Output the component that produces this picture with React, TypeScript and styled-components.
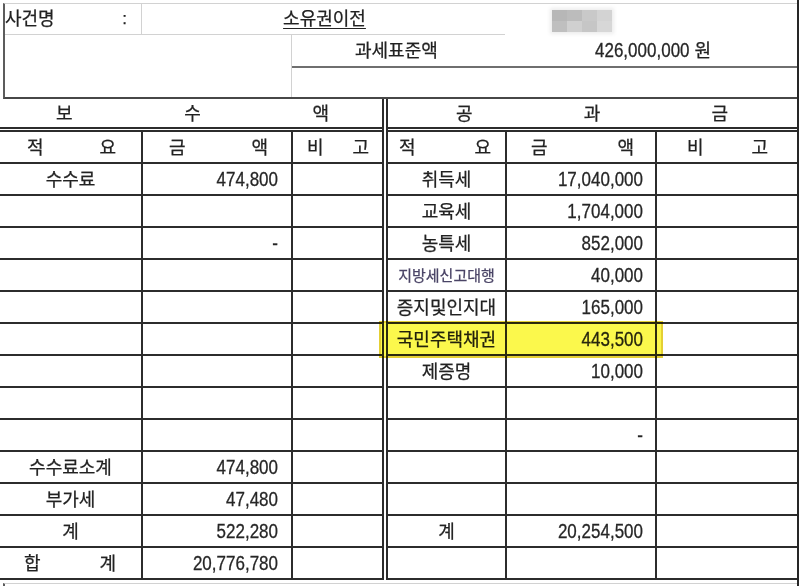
import React from "react";
import styled, { createGlobalStyle } from "styled-components";

const LINE = "#2c2c2c";
const LIGHT = "#d2d2d2";

const GlobalStyle = createGlobalStyle`
  html, body { margin: 0; padding: 0; background: #ffffff; }
  body {
    font-family: "Liberation Sans", "Noto Sans CJK KR", sans-serif;
    color: #222222;
    -webkit-text-stroke: 0.25px currentColor;
  }
`;

const Page = styled.div`
  position: relative;
  box-sizing: border-box;
  width: 799px;
  height: 586px;
  padding-top: 3px;
  border-right: 2px solid #262626;
  overflow: hidden;
  background: #fff;
`;

/* ---------- top information box ---------- */
const InfoBox = styled.div`
  box-sizing: border-box;
  height: 96px;
  margin-left: 3px;
  border-top: 1px solid ${LIGHT};
  border-left: 2px solid #5c5c5c;
  border-bottom: 2px solid #474747;
  display: flex;
  flex-direction: column;
`;

const InfoTop = styled.div`
  display: grid;
  grid-template-columns: 137px 363px 1fr;
  height: 31px;
`;

const InfoCell = styled.div<{ $divider?: boolean; $underline?: boolean }>`
  box-sizing: border-box;
  display: flex;
  align-items: center;
  border-bottom: ${(p) => (p.$underline ? `1px solid ${LIGHT}` : "none")};
  border-right: ${(p) => (p.$divider ? `1px solid ${LIGHT}` : "none")};
  font-size: 18px;
  line-height: 1;
`;

const CaseLabel = styled(InfoCell)`
  justify-content: space-between;
  padding: 0 14px 1px 0;
`;

const Colon = styled.span`
  font-size: 17px;
`;

const CaseValue = styled(InfoCell)`
  justify-content: center;
  padding-left: 2px;
`;

const Underlined = styled.span`
  text-decoration: underline;
  text-underline-offset: 3px;
  text-decoration-thickness: 1px;
`;

const BlurCell = styled(InfoCell)`
  align-items: flex-start;
  padding: 6px 0 0 47px;
`;

const Mosaic = styled.div`
  width: 60px;
  height: 22px;
  background:
    linear-gradient(to right, #b7b7b7 0 25%, #bcbcbc 25% 50%, #c9c9c9 50% 75%, #d3d3d3 75% 100%) top / 100% 50% no-repeat,
    linear-gradient(to right, #bfbfbf 0 25%, #d0d0d0 25% 50%, #c6c6c6 50% 75%, #d7d7d7 75% 100%) bottom / 100% 50% no-repeat;
  box-shadow: 0 0 4px 2px #ececec;
`;

const InfoBottom = styled.div`
  flex: 1;
  display: grid;
  grid-template-columns: 287px 1fr;
`;

const BlankBlock = styled.div`
  border-right: 1px solid ${LIGHT};
`;

const TaxBlock = styled.div`
  display: flex;
  flex-direction: column;
`;

const TaxRow = styled.div`
  box-sizing: border-box;
  height: 33px;
  display: flex;
  align-items: center;
  padding-left: 63px;
  border-bottom: 2px solid #6f6f6f;
  font-size: 18px;
  line-height: 1;
`;

const TaxLabel = styled.span`
  width: 240px;
`;

const TaxAmount = styled.span`
  display: flex;
  align-items: center;
  gap: 5px;
`;

/* ---------- main ledger ---------- */
const Ledger = styled.div`
  display: flex;
`;

const Side = styled.div<{ $side: "left" | "right" }>`
  box-sizing: border-box;
  width: ${(p) => (p.$side === "left" ? 384 : 411)}px;
  ${(p) => (p.$side === "left" ? "border-right" : "border-left")}: 2px solid ${LINE};
  display: flex;
  flex-direction: column;
`;

const SideGap = styled.div`
  width: 2px;
`;

const GroupTitle = styled.div<{ $pl: number; $pr: number }>`
  box-sizing: border-box;
  height: 33px;
  border-bottom: 5px double ${LINE};
  display: flex;
  align-items: center;
  justify-content: space-between;
  padding: 1px ${(p) => p.$pr}px 0 ${(p) => p.$pl}px;
  font-size: 18px;
  line-height: 1;
`;

const Row = styled.div<{ $cols: string }>`
  display: grid;
  grid-template-columns: ${(p) => p.$cols};
  height: 32px;
`;

type Align = "center" | "right" | "spread";

const Cell = styled.div<{ $align: Align; $pl?: number; $pr?: number; $last?: boolean }>`
  box-sizing: border-box;
  border-bottom: 2px solid ${LINE};
  border-right: ${(p) => (p.$last ? "none" : `2px solid ${LINE}`)};
  display: flex;
  align-items: center;
  justify-content: ${(p) =>
    p.$align === "center" ? "center" : p.$align === "right" ? "flex-end" : "space-between"};
  padding: 1px ${(p) => p.$pr ?? 0}px 0 ${(p) => p.$pl ?? 0}px;
  font-size: 18px;
  line-height: 1;
  white-space: nowrap;
`;

const Num = styled.span`
  display: inline-block;
  font-size: 17px;
  line-height: 1;
  transform: scaleY(1.18);
  color: #262626;
`;

const SmallLabel = styled.span`
  font-size: 15px;
  color: #4a4466;
`;

const Highlight = styled.div`
  position: absolute;
  left: 379px;
  top: 321px;
  width: 284px;
  height: 37px;
  box-sizing: border-box;
  background: #fbf84c;
  border: 2px solid #e4cf34;
  mix-blend-mode: multiply;
  pointer-events: none;
`;

const Footer = styled.div`
  margin: 3px 0 0 3px;
  height: 10px;
  border-top: 1px solid ${LIGHT};
  border-left: 2px solid #5c5c5c;
`;

/* ---------- data ---------- */
type Entry = { label?: string; spread?: [string, string]; small?: boolean; amount?: string };

const leftRows: Entry[] = [
  { label: "수수료", amount: "474,800" },
  {},
  { amount: "-" },
  {},
  {},
  {},
  {},
  {},
  {},
  { label: "수수료소계", amount: "474,800" },
  { label: "부가세", amount: "47,480" },
  { label: "계", amount: "522,280" },
  { spread: ["합", "계"], amount: "20,776,780" },
];

const rightRows: Entry[] = [
  { label: "취득세", amount: "17,040,000" },
  { label: "교육세", amount: "1,704,000" },
  { label: "농특세", amount: "852,000" },
  { label: "지방세신고대행", small: true, amount: "40,000" },
  { label: "증지및인지대", amount: "165,000" },
  { label: "국민주택채권", amount: "443,500" },
  { label: "제증명", amount: "10,000" },
  {},
  { amount: "-" },
  {},
  {},
  { label: "계", amount: "20,254,500" },
  {},
];

type SideSpec = {
  side: "left" | "right";
  cols: string;
  title: [string, string, string];
  titlePad: [number, number];
  headPad: [number, number][];
  amountPad: number;
  rows: Entry[];
};

const sides: SideSpec[] = [
  {
    side: "left",
    cols: "143px 150px 89px",
    title: ["보", "수", "액"],
    titlePad: [56, 53],
    headPad: [
      [27, 25],
      [26, 23],
      [14, 13],
    ],
    amountPad: 13,
    rows: leftRows,
  },
  {
    side: "right",
    cols: "119px 150px 140px",
    title: ["공", "과", "금"],
    titlePad: [68, 69],
    headPad: [
      [11, 14],
      [24, 21],
      [30, 29],
    ],
    amountPad: 12,
    rows: rightRows,
  },
];

const headWords: [string, string][] = [
  ["적", "요"],
  ["금", "액"],
  ["비", "고"],
];

function LedgerSide({ spec }: { spec: SideSpec }) {
  return (
    <Side $side={spec.side}>
      <GroupTitle $pl={spec.titlePad[0]} $pr={spec.titlePad[1]}>
        {spec.title.map((t) => (
          <span key={t}>{t}</span>
        ))}
      </GroupTitle>
      <Row $cols={spec.cols}>
        {headWords.map(([a, b], i) => (
          <Cell
            key={a}
            $align="spread"
            $pl={spec.headPad[i][0]}
            $pr={spec.headPad[i][1]}
            $last={i === 2}
          >
            <span>{a}</span>
            <span>{b}</span>
          </Cell>
        ))}
      </Row>
      {spec.rows.map((r, i) => (
        <Row key={i} $cols={spec.cols}>
          {r.spread ? (
            <Cell $align="spread" $pl={24} $pr={25}>
              <span>{r.spread[0]}</span>
              <span>{r.spread[1]}</span>
            </Cell>
          ) : (
            <Cell $align="center">
              {r.small ? <SmallLabel>{r.label}</SmallLabel> : r.label}
            </Cell>
          )}
          <Cell $align="right" $pr={spec.amountPad}>
            {r.amount && <Num>{r.amount}</Num>}
          </Cell>
          <Cell $align="center" $last />
        </Row>
      ))}
    </Side>
  );
}

export default function App() {
  return (
    <>
      <GlobalStyle />
      <Page>
        <InfoBox>
          <InfoTop>
            <CaseLabel $divider $underline>
              <span>사건명</span>
              <Colon>:</Colon>
            </CaseLabel>
            <CaseValue $underline>
              <Underlined>소유권이전</Underlined>
            </CaseValue>
            <BlurCell>
              <Mosaic />
            </BlurCell>
          </InfoTop>
          <InfoBottom>
            <BlankBlock />
            <TaxBlock>
              <TaxRow>
                <TaxLabel>과세표준액</TaxLabel>
                <TaxAmount>
                  <Num>426,000,000</Num>
                  <span>원</span>
                </TaxAmount>
              </TaxRow>
            </TaxBlock>
          </InfoBottom>
        </InfoBox>
        <Ledger>
          <LedgerSide spec={sides[0]} />
          <SideGap />
          <LedgerSide spec={sides[1]} />
        </Ledger>
        <Footer />
        <Highlight />
      </Page>
    </>
  );
}
